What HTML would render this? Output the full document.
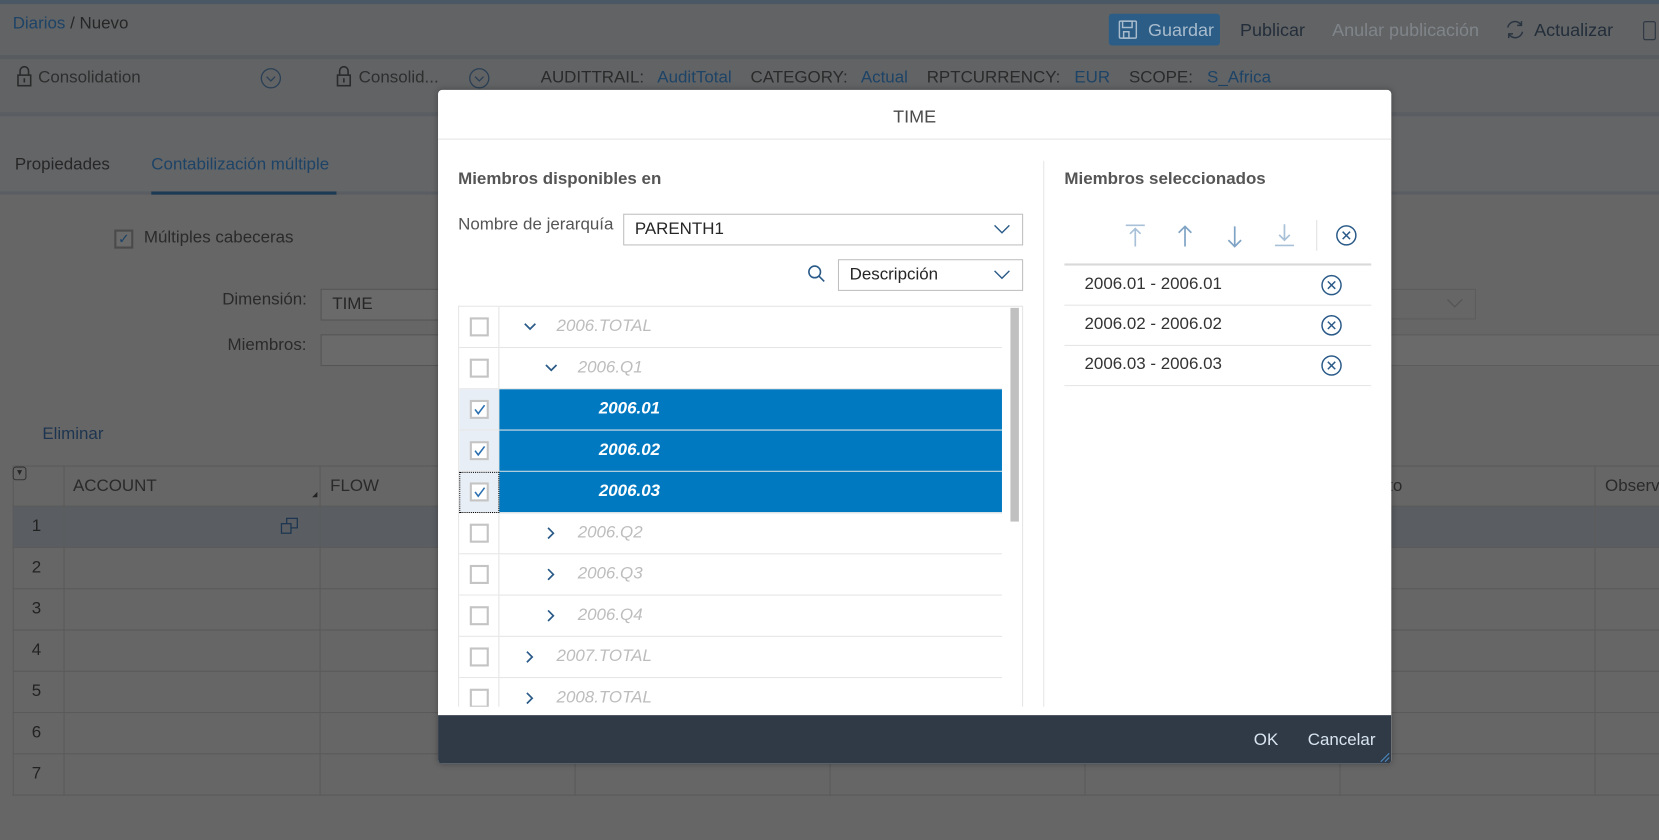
<!DOCTYPE html>
<html><head><meta charset="utf-8"><style>
*{box-sizing:border-box;margin:0;padding:0}
html,body{width:1659px;height:840px;overflow:hidden;background:#666}
#w{position:absolute;left:0;top:0;width:1568px;height:794px;transform:scale(1.05804,1.05793);transform-origin:0 0;font-family:"Liberation Sans",sans-serif;background:#666;color:#262626}
.a{position:absolute;white-space:nowrap}
.t{font-size:16px}
.b{color:#1d4366}
.cb{position:absolute;width:18px;height:18px;border:2px solid #c4c4c4;background:#fff}
.it{font-style:italic;color:#bdbdbd;font-size:16px;position:absolute;top:10px}
.sel{background:#0079c1}
.sel .it{color:#fff;font-weight:bold}
</style></head><body><div id="w">
<div class="a" style="left:0;top:0;width:1568px;height:4px;background:#4a5866"></div>
<div class="a" style="left:0;top:4px;width:1568px;height:48px;background:#616365"></div>
<div class="a" style="left:0;top:52px;width:1568px;height:4px;background:#585c60"></div>
<div class="a" style="left:0;top:56px;width:1568px;height:50px;background:#616365"></div>
<div class="a" style="left:0;top:106px;width:1568px;height:4px;background:#5a5e62"></div>
<div class="a" style="left:0;top:110px;width:1568px;height:71px;background:#646567"></div>
<div class="a" style="left:0;top:181px;width:1568px;height:3px;background:#5a5e62"></div>
<div class="a t" style="left:12px;top:14px"><span class="b">Diarios</span> / Nuevo</div>
<div class="a" style="left:1048px;top:13px;width:105px;height:30px;background:#2b5d86;border-radius:3px"></div>
<svg class="a" style="left:1057px;top:19px" width="18" height="18" viewBox="0 0 18 18" fill="none" stroke="#a9bccd" stroke-width="1.4"><rect x="1" y="1" width="16" height="16" rx="1"/><rect x="4" y="1" width="9" height="6"/><rect x="5" y="11" width="5" height="6"/></svg>
<div class="a t" style="left:1085px;top:19px;color:#a9bccd;font-size:17px">Guardar</div>
<div class="a t" style="left:1172px;top:19px;font-size:17px;color:#232e3a">Publicar</div>
<div class="a t" style="left:1259px;top:19px;font-size:17px;color:#80858a">Anular publicación</div>
<svg class="a" style="left:1422px;top:18px" width="20" height="20" viewBox="0 0 20 20" fill="none" stroke="#2a3440" stroke-width="1.4"><path d="M16 6A7 7 0 0 0 3 8M4 14a7 7 0 0 0 13-2"/><path d="M16 2v4h-4M4 18v-4h4"/></svg>
<div class="a t" style="left:1450px;top:19px;font-size:17px;color:#232e3a">Actualizar</div>
<div class="a" style="left:1553px;top:20px;width:12px;height:18px;border:1.5px solid #2a3440;border-radius:2px"></div>
<svg class="a" style="left:16px;top:62px" width="14" height="20" viewBox="0 0 14 20" fill="none" stroke="#2a2a2a" stroke-width="1.5"><path d="M3 9V5a4 4 0 0 1 8 0v4"/><rect x="1" y="9" width="12" height="10"/><path d="M7 12v4"/></svg>
<div class="a t" style="left:36px;top:65px;color:#2e2e2e">Consolidation</div>
<svg class="a" style="left:246px;top:64px" width="20" height="20" fill="none" stroke="#2a3f55" stroke-width="1.2"><circle cx="10" cy="10" r="9"/><path d="M6 8.5l4 4 4-4"/></svg>
<svg class="a" style="left:318px;top:62px" width="14" height="20" viewBox="0 0 14 20" fill="none" stroke="#2a2a2a" stroke-width="1.5"><path d="M3 9V5a4 4 0 0 1 8 0v4"/><rect x="1" y="9" width="12" height="10"/><path d="M7 12v4"/></svg>
<div class="a t" style="left:339px;top:65px;color:#2e2e2e">Consolid...</div>
<svg class="a" style="left:443px;top:64px" width="20" height="20" fill="none" stroke="#2a3f55" stroke-width="1.2"><circle cx="10" cy="10" r="9"/><path d="M6 8.5l4 4 4-4"/></svg>
<div class="a t" style="left:511px;top:65px;color:#2a2a2a">AUDITTRAIL:&nbsp;&nbsp; <span class="b">AuditTotal</span> &nbsp;&nbsp; CATEGORY:&nbsp;&nbsp; <span class="b">Actual</span> &nbsp;&nbsp; RPTCURRENCY:&nbsp;&nbsp; <span class="b">EUR</span> &nbsp;&nbsp; SCOPE:&nbsp;&nbsp; <span class="b">S_Africa</span></div>
<div class="a t" style="left:14px;top:147px">Propiedades</div>
<div class="a t" style="left:143px;top:147px;color:#1d4366">Contabilización múltiple</div>
<div class="a" style="left:143px;top:181px;width:175px;height:3px;background:#1d3a55"></div>
<div class="a" style="left:108px;top:217px;width:18px;height:18px;border:2px solid #4a4a4a;background:#6a6a6a;color:#1d4366;font-size:13px;text-align:center;line-height:14px">✓</div>
<div class="a t" style="left:136px;top:216px;color:#2a2a2a">Múltiples cabeceras</div>
<div class="a t" style="left:210px;top:275px;color:#2a2a2a">Dimensión:</div>
<div class="a" style="left:303px;top:273px;width:120px;height:30px;border:1px solid #555;background:#6a6a6a"></div>
<div class="a t" style="left:314px;top:279px">TIME</div>
<div class="a t" style="left:215px;top:318px;color:#2a2a2a">Miembros:</div>
<div class="a" style="left:303px;top:316px;width:120px;height:30px;border:1px solid #555;background:#6a6a6a"></div>
<div class="a" style="left:1300px;top:273px;width:95px;height:29px;border:1px solid #5c5c5c"></div>
<svg class="a" style="left:1367px;top:282px" width="16" height="10"><path d="M1 1l7 7 7-7" fill="none" stroke="#555" stroke-width="1.2"/></svg>
<div class="a" style="left:1300px;top:316px;width:280px;height:30px;border:1px solid #5c5c5c;background:#6a6a6a"></div>
<div class="a t" style="left:40px;top:402px;color:#1d3550">Eliminar</div>
<div class="a" style="left:12px;top:440px;width:1556px;height:312px;border-top:1px solid #5a5a5a"></div>
<div class="a" style="left:12px;top:478px;width:1556px;height:39px;background:#5a5e62"></div>
<div class="a" style="left:12px;top:440px;width:1px;height:312px;background:#5a5a5a"></div>
<div class="a" style="left:12px;top:751px;width:1556px;height:1px;background:#555"></div>
<div id="tbl"></div>
<div class="a" style="left:12px;top:441px;width:13px;height:13px;border:1.5px solid #333;border-radius:3px;font-size:8px;text-align:center;line-height:10px">▼</div>
<div class="a t" style="left:69px;top:451px;color:#2a2a2a">ACCOUNT</div>
<div class="a" style="left:295px;top:465px;width:0;height:0;border-left:5px solid transparent;border-bottom:5px solid #222"></div>
<div class="a t" style="left:312px;top:451px;color:#2a2a2a">FLOW</div>
<div class="a t" style="left:1312px;top:451px;color:#2a2a2a">to</div>
<div class="a t" style="left:1517px;top:451px;color:#2a2a2a">Observ</div>
<svg class="a" style="left:265px;top:489px" width="18" height="16" fill="none" stroke="#1d3550" stroke-width="1.2"><rect x="1" y="6" width="9" height="9"/><path d="M6 6V1h10v9h-6"/></svg>
<script>
var h='',cols=[60,302,543,784,1025,1266,1507];
for(var i=0;i<cols.length;i++)h+='<div class="a" style="left:'+cols[i]+'px;top:440px;width:1px;height:312px;background:#5a5a5a"></div>';
for(var r=0;r<8;r++){var y=478+r*39;h+='<div class="a" style="left:12px;top:'+y+'px;width:1556px;height:1px;background:#5a5a5a"></div>';if(r<7)h+='<div class="a t" style="left:30px;top:'+(y+11)+'px;color:#222">'+(r+1)+'</div>';}
document.getElementById('tbl').innerHTML=h;
</script>
<div class="a" style="left:414px;top:85px;width:901px;height:637px;background:#fff;border-radius:4px;overflow:hidden;box-shadow:0 0 6px rgba(0,0,0,.3)">
<div class="a" style="left:0;top:46px;width:901px;height:1px;background:#e5e5e5"></div>
<div class="a t" style="left:0;width:901px;top:16px;text-align:center;color:#4a4a4a;font-size:17px">TIME</div>
<div class="a" style="left:0;top:591px;width:901px;height:46px;background:#2f3a46"></div>
<div class="a t" style="left:771px;top:606px;color:#d8e4ef">OK</div>
<div class="a t" style="left:822px;top:606px;color:#d8e4ef">Cancelar</div>
<svg class="a" style="left:890px;top:626px" width="10" height="10" stroke="#4b8bc4" stroke-width="1"><path d="M1 9L9 1M5 9L9 5"/></svg>
<div class="a" style="left:572px;top:67px;width:1px;height:516px;background:#e5e5e5"></div>
</div>
<div class="a t" style="left:433px;top:161px;font-weight:bold;color:#555">Miembros disponibles en</div>
<div class="a t" style="left:433px;top:204px;color:#555">Nombre de jerarquía</div>
<div class="a" style="left:589px;top:202px;width:378px;height:30px;border:1px solid #bfbfbf"></div>
<div class="a t" style="left:600px;top:208px">PARENTH1</div>
<svg class="a" style="left:939px;top:212px" width="16" height="10"><path d="M1 1l7 7 7-7" fill="none" stroke="#2a5a88" stroke-width="1.3"/></svg>
<svg class="a" style="left:763px;top:250px" width="18" height="18" fill="none" stroke="#2a5a88" stroke-width="1.5"><circle cx="7" cy="7" r="5.5"/><path d="M11 11l5 5"/></svg>
<div class="a" style="left:792px;top:245px;width:175px;height:30px;border:1px solid #bfbfbf"></div>
<div class="a t" style="left:803px;top:251px">Descripción</div>
<svg class="a" style="left:939px;top:255px" width="16" height="10"><path d="M1 1l7 7 7-7" fill="none" stroke="#2a5a88" stroke-width="1.3"/></svg>
<div class="a" style="left:433px;top:289px;width:534px;height:379px;border:1px solid #e5e5e5;border-bottom:none;overflow:hidden" id="tree"></div>
<div class="a" style="left:955px;top:291px;width:8px;height:202px;background:#c0c0c0"></div>
<script>
var items=[["2006.TOTAL",0,"d",0],["2006.Q1",1,"d",0],["2006.01",2,"",1],["2006.02",2,"",1],["2006.03",2,"",1],["2006.Q2",1,"r",0],["2006.Q3",1,"r",0],["2006.Q4",1,"r",0],["2007.TOTAL",0,"r",0],["2008.TOTAL",0,"r",0]];
var t='';
items.forEach(function(it,i){var y=i*39;
t+='<div class="a" style="left:0;top:'+y+'px;width:38px;height:39px;border-bottom:1px solid #e5e5e5;border-right:1px solid #e5e5e5;background:'+(it[3]?'#e8eef5':'#fff')+(i==4?';outline:1px dotted #000;outline-offset:-1px':'')+'"></div>';
t+='<div class="cb" style="left:10px;top:'+(y+10)+'px">'+(it[3]?'<svg width="14" height="14" style="position:absolute;left:0;top:0"><path d="M3 7l3 4 6-8" fill="none" stroke="#2a6fb0" stroke-width="1.5"/></svg>':'')+'</div>';
t+='<div class="a'+(it[3]?' sel':'')+'" style="left:38px;top:'+y+'px;width:475px;height:39px;border-bottom:1px solid #e5e5e5">';
var ix=68+it[1]*20,cx=ix-47;
if(it[2]=='d')t+='<svg class="a" style="left:'+(cx+2)+'px;top:15px" width="12" height="8"><path d="M1 1l5 5 5-5" fill="none" stroke="#2a5a88" stroke-width="1.6"/></svg>';
if(it[2]=='r')t+='<svg class="a" style="left:'+(cx+4)+'px;top:13px" width="8" height="12"><path d="M1 1l5 5-5 5" fill="none" stroke="#2a5a88" stroke-width="1.6"/></svg>';
t+='<div class="it" style="left:'+(it[3]?94:ix-14)+'px">'+it[0]+'</div></div>';});
document.getElementById('tree').innerHTML=t;
</script>
<div class="a t" style="left:1006px;top:161px;font-weight:bold;color:#555">Miembros seleccionados</div>
<svg class="a" style="left:1062px;top:210px" width="170" height="26" fill="none" stroke-width="1.6">
<g stroke="#a9c1d8"><path d="M2 3h18M11 6v17M6 11l5-5 5 5"/></g>
<g stroke="#7fa3c4"><path d="M58 4v19M52 10l6-6 6 6"/><path d="M105 4v19M99 17l6 6 6-6"/></g>
<g stroke="#a9c1d8"><path d="M152 2v15M147 12l5 5 5-5M143 22h18"/></g></svg>
<div class="a" style="left:1244px;top:208px;width:1px;height:29px;background:#e0e0e0"></div>
<svg class="a" style="left:1262px;top:212px" width="21" height="21" fill="none" stroke="#2a5a88" stroke-width="1.4"><circle cx="10.5" cy="10.5" r="9"/><path d="M7 7l7 7M14 7l-7 7"/></svg>
<div class="a" style="left:1006px;top:249px;width:290px;height:2px;background:#d9d9d9"></div>
<div id="sel"></div>
<script>
var s='',v=["2006.01 - 2006.01","2006.02 - 2006.02","2006.03 - 2006.03"];
v.forEach(function(x,i){var y=251+i*38;
s+='<div class="a t" style="left:1025px;top:'+(y+9)+'px;color:#333">'+x+'</div>';
s+='<svg class="a" style="left:1248px;top:'+(y+8)+'px" width="21" height="21" fill="none" stroke="#2a5a88" stroke-width="1.4"><circle cx="10.5" cy="10.5" r="9"/><path d="M7 7l7 7M14 7l-7 7"/></svg>';
s+='<div class="a" style="left:1006px;top:'+(y+37)+'px;width:290px;height:1px;background:#e5e5e5"></div>';});
document.getElementById('sel').innerHTML=s;
</script>
</div></body></html>
